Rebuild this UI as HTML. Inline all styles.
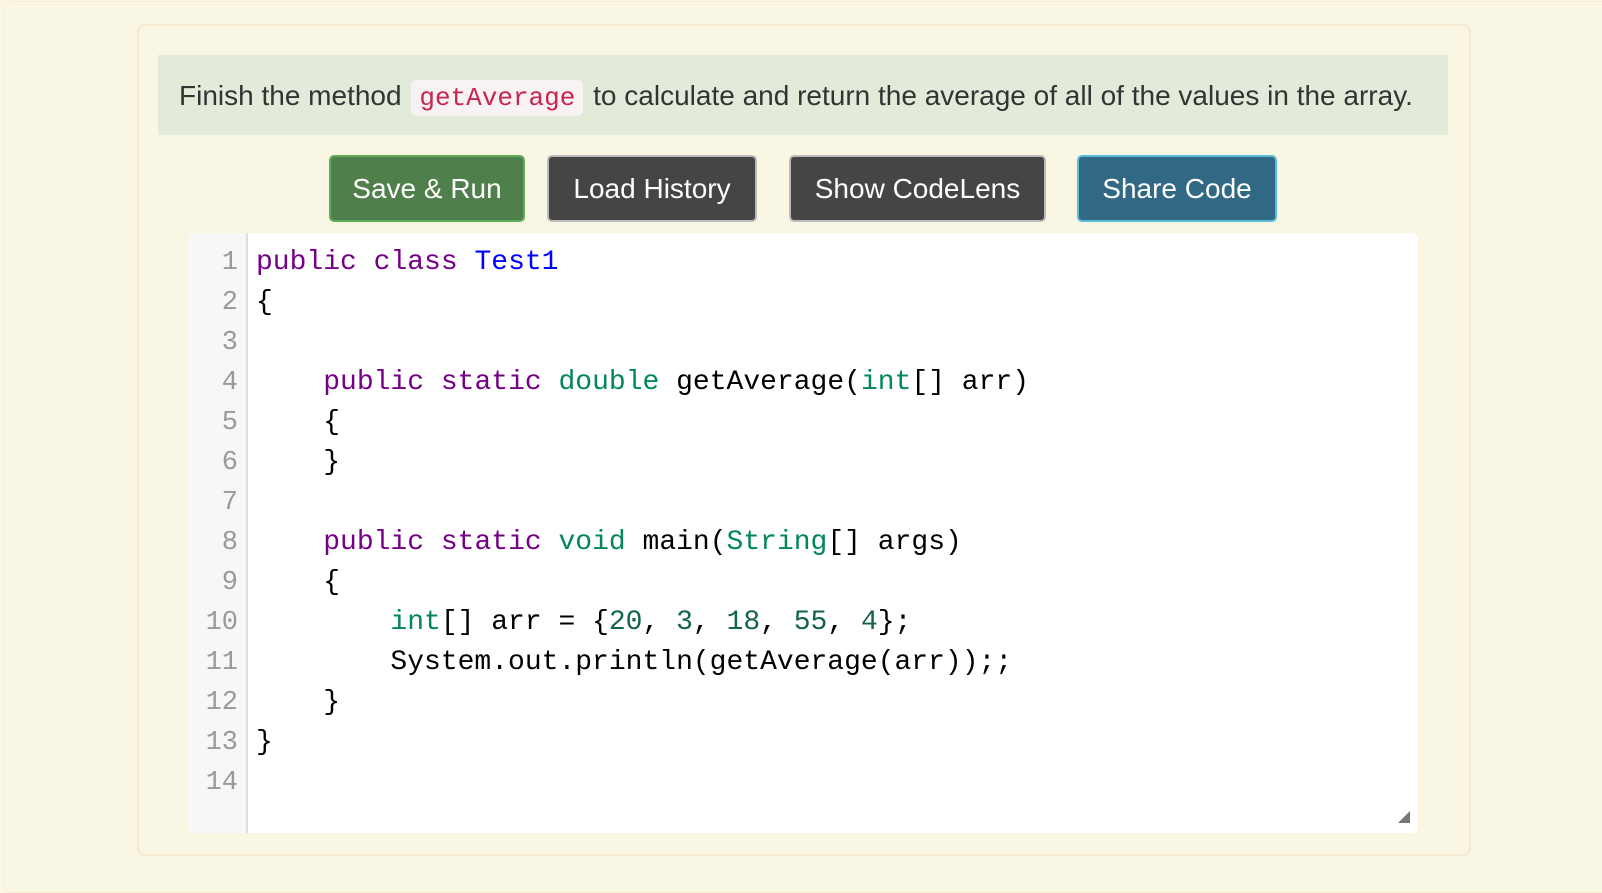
<!DOCTYPE html>
<html><head><meta charset="utf-8"><style>
html,body{margin:0;padding:0;width:1602px;height:882px;overflow:hidden;background:#faf6e4;font-family:"Liberation Sans",sans-serif}
.outer{position:absolute;left:3px;top:1px;width:1605px;height:890px;border:1px solid #f5ecd2;border-radius:8px;background:#faf6e4}
.cont{position:absolute;left:137px;top:24px;width:1330px;height:828px;border:2px solid #f4ead0;border-radius:8px}
.banner{position:absolute;left:158px;top:55px;width:1290px;height:80px;background:#e2ebda}
.btxt{position:absolute;left:179px;top:78px;font-size:28px;color:#333;white-space:nowrap;line-height:36px}
.code{display:inline-block;background:#f9f2f4;color:#c7254e;font-family:"Liberation Mono",monospace;font-size:26px;border-radius:6px;padding:0 8px;line-height:36px;margin:0 2px}
.btn{position:absolute;top:155px;height:67px;border-radius:5px;color:#fff;font-size:28px;line-height:63px;text-align:center;box-sizing:border-box}
.ed{position:absolute;left:188px;top:233px;width:1230px;height:600px;background:#fff;border-radius:6px;overflow:hidden}
.gut{position:absolute;left:0;top:0;width:58px;height:600px;background:#f7f7f7;border-right:2px solid #ddd}
.ln{position:absolute;left:0;width:50px;text-align:right;color:#999;font-family:"Liberation Mono",monospace;font-size:27px}
.cl{position:absolute;left:68px;font-family:"Liberation Mono",monospace;font-size:28px;white-space:pre;color:#000}
.k{color:#708}.d{color:#00f}.t{color:#085}.n{color:#164}
</style></head><body>
<div class="outer"></div>
<div class="cont"></div>
<div class="banner"></div>
<div class="btxt">Finish the method <span class="code">getAverage</span> to calculate and return the average of all of the values in the array.</div>
<div class="btn" style="left:329px;width:196px;background:#4f7f4a;border:2px solid #62ad5a">Save &amp; Run</div>
<div class="btn" style="left:547px;width:210px;background:#454545;border:2px solid #bbb">Load History</div>
<div class="btn" style="left:789px;width:257px;background:#454545;border:2px solid #bbb">Show CodeLens</div>
<div class="btn" style="left:1077px;width:200px;background:#316985;border:2px solid #5bbbd8">Share Code</div>
<div class="ed">
<div class="gut"></div>
<div class="ln" style="top:15px">1</div><div class="ln" style="top:55px">2</div><div class="ln" style="top:95px">3</div><div class="ln" style="top:135px">4</div><div class="ln" style="top:175px">5</div><div class="ln" style="top:215px">6</div><div class="ln" style="top:255px">7</div><div class="ln" style="top:295px">8</div><div class="ln" style="top:335px">9</div><div class="ln" style="top:375px">10</div><div class="ln" style="top:415px">11</div><div class="ln" style="top:455px">12</div><div class="ln" style="top:495px">13</div><div class="ln" style="top:535px">14</div>
<div class="cl" style="top:14px"><span class="k">public</span> <span class="k">class</span> <span class="d">Test1</span></div>
<div class="cl" style="top:54px">{</div>
<div class="cl" style="top:134px">    <span class="k">public</span> <span class="k">static</span> <span class="t">double</span> getAverage(<span class="t">int</span>[] arr)</div>
<div class="cl" style="top:174px">    {</div>
<div class="cl" style="top:214px">    }</div>
<div class="cl" style="top:294px">    <span class="k">public</span> <span class="k">static</span> <span class="t">void</span> main(<span class="t">String</span>[] args)</div>
<div class="cl" style="top:334px">    {</div>
<div class="cl" style="top:374px">        <span class="t">int</span>[] arr = {<span class="n">20</span>, <span class="n">3</span>, <span class="n">18</span>, <span class="n">55</span>, <span class="n">4</span>};</div>
<div class="cl" style="top:414px">        System.out.println(getAverage(arr));;</div>
<div class="cl" style="top:454px">    }</div>
<div class="cl" style="top:494px">}</div>
<svg style="position:absolute;left:1208px;top:576px" width="16" height="16"><path d="M2 14 L14 2 L14 14 Z" fill="#777"/></svg>
</div>
</body></html>
